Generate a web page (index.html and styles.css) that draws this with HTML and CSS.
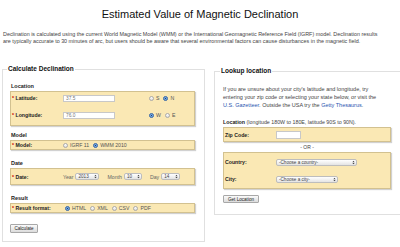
FILE: index.html
```html
<!DOCTYPE html>
<html lang="en">
<head>
  <meta charset="UTF-8">
  <meta name="viewport" content="width=device-width, initial-scale=1.0">
  <title>Estimated Value of Magnetic Declination</title>
  <link rel="stylesheet" href="styles.css">
</head>
<body>

  <div class="page">
    <h1>Estimated Value of Magnetic Declination</h1>
    <p class="intro">Declination is calculated using the current World Magnetic Model (WMM) or the International Geomagnetic Reference Field (IGRF) model. Declination results<br>are typically accurate to 30 minutes of arc, but users should be aware that several environmental factors can cause disturbances in the magnetic field.</p>

    <div class="columns">

      <fieldset class="panel calc">
        <legend>Calculate Declination</legend>

        <div class="group-title">Location</div>
        <div class="box box-location">
          <div class="row">
            <span class="field-label"><span class="req">*</span> Latitude:</span>
            <span class="text-input">37.5</span>
            <span class="choices hemi"><span class="radio"></span>S <span class="radio on"></span>N</span>
          </div>
          <div class="row">
            <span class="field-label"><span class="req">*</span> Longitude:</span>
            <span class="text-input">76.0</span>
            <span class="choices hemi"><span class="radio on"></span>W <span class="radio"></span>E</span>
          </div>
        </div>

        <div class="group-title model-title">Model</div>
        <div class="box">
          <div class="row">
            <span class="field-label"><span class="req">*</span> Model:</span>
            <span class="choices"><span class="radio first"></span>IGRF 11 <span class="radio on"></span>WMM 2010</span>
          </div>
        </div>

        <div class="group-title">Date</div>
        <div class="box box-date">
          <div class="row">
            <span class="field-label"><span class="req">*</span> Date:</span>
            <span class="date-part first">Year</span>
            <span class="select sel-year">2013 <svg viewBox="0 0 4 6"><path d="M0.5 2.5 2 0.8 3.5 2.5zM0.5 3.5 2 5.2 3.5 3.5z" fill="#444"/></svg></span>
            <span class="date-part">Month</span>
            <span class="select sel-month">10 <svg viewBox="0 0 4 6"><path d="M0.5 2.5 2 0.8 3.5 2.5zM0.5 3.5 2 5.2 3.5 3.5z" fill="#444"/></svg></span>
            <span class="date-part">Day</span>
            <span class="select sel-day">14 <svg viewBox="0 0 4 6"><path d="M0.5 2.5 2 0.8 3.5 2.5zM0.5 3.5 2 5.2 3.5 3.5z" fill="#444"/></svg></span>
          </div>
        </div>

        <div class="group-title">Result</div>
        <div class="box">
          <div class="row">
            <span class="field-label"><span class="req">*</span> Result format:</span>
            <span class="choices formats"><span class="radio on"></span>HTML <span class="radio"></span>XML <span class="radio"></span>CSV <span class="radio"></span>PDF</span>
          </div>
        </div>

        <button class="btn btn-calc">Calculate</button>
      </fieldset>

      <fieldset class="panel lookup">
        <legend>Lookup location</legend>
        <p class="lookup-text">If you are unsure about your city's latitude and longitude, try<br>entering your zip code or selecting your state below, or visit the<br><a href="#">U.S. Gazetteer</a>. Outside the USA try the <a href="#">Getty Thesaurus</a>.</p>
        <p class="range"><b>Location</b> (longitude 180W to 180E, latitude 90S to 90N).</p>

        <div class="box box-zip">
          <div class="row">
            <span class="field-label">Zip Code:</span>
            <span class="text-input zip"></span>
          </div>
        </div>
        <div class="or">- OR -</div>
        <div class="box box-place">
          <div class="row">
            <span class="field-label">Country:</span>
            <span class="select sel-country">-Choose a country- <svg viewBox="0 0 4 6"><path d="M0.5 2.5 2 0.8 3.5 2.5zM0.5 3.5 2 5.2 3.5 3.5z" fill="#444"/></svg></span>
          </div>
          <div class="row">
            <span class="field-label">City:</span>
            <span class="select sel-city">-Choose a city- <svg viewBox="0 0 4 6"><path d="M0.5 2.5 2 0.8 3.5 2.5zM0.5 3.5 2 5.2 3.5 3.5z" fill="#444"/></svg></span>
          </div>
        </div>

        <button class="btn btn-lookup">Get Location</button>
      </fieldset>

    </div>
  </div>

</body>
</html>
```

FILE: styles.css
```css
body {
  margin: 0;
  font-family: "Liberation Sans", Arial, sans-serif;
  color: #333;
  background: #fff;
  overflow: hidden;
}

.page {
  width: 420px;
}

h1 {
  margin: 0;
  padding-top: 8px;
  width: 400px;
  text-align: center;
  font-size: 11px;
  line-height: 12px;
  font-weight: normal;
  color: #111;
}

.intro {
  margin: 11px 0 0 3px;
  font-size: 5.4px;
  line-height: 7px;
  white-space: nowrap;
  color: #444;
}

.columns {
  display: flex;
  align-items: flex-start;
  gap: 9px;
  margin-top: 20px;
  padding-left: 2px;
}

/* the two grey framed panels */
.panel {
  margin: 0;
  border: 1px solid #e0e0e0;
  min-inline-size: 0;
}

.panel legend {
  margin-left: -3px;
  padding: 0 1px;
  font-size: 6.5px;
  line-height: 8px;
  font-weight: bold;
  color: #111;
}

.calc {
  width: 185px;
  padding: 0 9px 8px 7px;
}

.lookup {
  width: 168px;
  margin-top: 2px;
  padding: 0 14px 11px 8px;
}

.group-title {
  margin: 10px 0 1px 1px;
  font-size: 5.5px;
  line-height: 7px;
  font-weight: bold;
  color: #222;
}

.model-title {
  margin-top: 6px;
}

/* yellow field boxes */
.box {
  background-color: #fae8b4;
  border: 1px solid #d2c190;
  box-shadow: 1px 1px 1px rgba(0, 0, 0, 0.18);
  padding: 0;
}

.box-location {
  padding: 1px 0 5px;
}

.box-location .row + .row {
  margin-top: 7px;
}

.row {
  display: flex;
  align-items: center;
  height: 8px;
  font-size: 5.2px;
}

.box-location .row {
  height: 10px;
}

.box-date .row {
  height: 15px;
}

.field-label {
  width: 51px;
  flex: none;
  padding-left: 1px;
  font-weight: bold;
  color: #222;
}

.req {
  color: #c00;
}

.text-input {
  display: inline-block;
  box-sizing: border-box;
  width: 52px;
  height: 7px;
  line-height: 6px;
  padding-left: 2px;
  background: #fff;
  border: 1px solid #c8c8c8;
  font-size: 4.8px;
  color: #777;
}

.choices {
  display: flex;
  align-items: center;
  gap: 1px;
  color: #555;
}

.hemi {
  margin-left: 31px;
}

.formats {
  margin-left: -1px;
}

.radio {
  display: inline-block;
  box-sizing: border-box;
  width: 5px;
  height: 5px;
  margin: 0 1px 0 3px;
  border-radius: 50%;
  border: 1px solid #aaa;
  background: linear-gradient(#fff, #ddd);
}

.radio.first {
  margin-left: 0;
}

.radio.on {
  border-color: #2f62a6;
  background: radial-gradient(circle, #1c3f73 0, #1c3f73 30%, #6fa4e0 45%, #9cc3ef 100%);
}

.date-part {
  color: #666;
  margin: 0 2px 0 8px;
}

.date-part.first {
  margin-left: 0;
}

.select {
  display: inline-flex;
  align-items: center;
  justify-content: space-between;
  box-sizing: border-box;
  height: 7px;
  padding: 0 1px 0 2px;
  border: 1px solid #bdbdbd;
  border-radius: 2px;
  background: linear-gradient(#fff, #e4e4e4);
  font-size: 4.6px;
  color: #444;
}

.select svg {
  width: 3px;
  height: 5px;
  margin-left: 2px;
}

.sel-year { width: 24px; }
.sel-month { width: 18px; }
.sel-day { width: 19px; }

.btn {
  display: block;
  margin-top: 11px;
  padding: 0 2px;
  height: 9px;
  font-family: "Liberation Sans", Arial, sans-serif;
  font-size: 4.6px;
  color: #222;
  background: linear-gradient(#fafafa, #dcdcdc);
  border: 1px solid #a8a8a8;
  border-radius: 1px;
}

.btn-calc {
  width: 28px;
}

/* lookup panel */
.lookup-text {
  margin: 10px 0 0;
  font-size: 5.5px;
  line-height: 8px;
  white-space: nowrap;
  color: #444;
}

.lookup-text a {
  color: #2a55b0;
  text-decoration: none;
}

.range {
  margin: 9px 0 1px;
  font-size: 5.3px;
  line-height: 8px;
  white-space: nowrap;
  color: #444;
}

.range b {
  color: #222;
}

.box-zip .row {
  height: 13px;
}

.zip {
  width: 25px;
  height: 8px;
}

.or {
  text-align: center;
  font-size: 5px;
  line-height: 10px;
  color: #444;
}

.box-place {
  padding: 3px 0 3px;
}

.box-place .row {
  height: 12px;
}

.box-place .row + .row {
  margin-top: 5px;
}

.sel-country { width: 81px; }
.sel-city { width: 62px; }

.btn-lookup {
  width: 36px;
  height: 8px;
  margin-top: 6px;
}
```
